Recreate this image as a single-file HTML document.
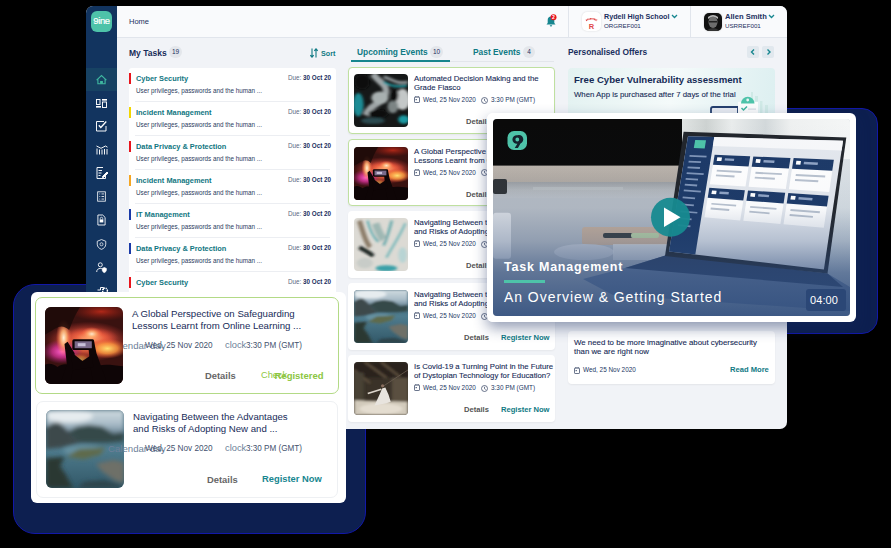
<!DOCTYPE html>
<html><head><meta charset="utf-8">
<style>
*{margin:0;padding:0;box-sizing:border-box}
html,body{width:891px;height:548px;overflow:hidden;background:#000}
body{position:relative;font-family:"Liberation Sans",sans-serif;color:#1b2f5e}
.a{position:absolute}
.panel{left:86px;top:6px;width:701px;height:423px;background:#f1f3f7;border-radius:7px;overflow:hidden}
.side{left:86px;top:6px;width:31px;height:423px;background:#12345f;border-radius:7px 0 0 7px}
.hdr{left:117px;top:6px;width:670px;height:32px;background:#f9fafc;border-bottom:1px solid #e1e5ec;border-radius:0 7px 0 0}
.nowrap{white-space:nowrap}
.a svg{display:block}
.teal{color:#0f7a84}
.bold{font-weight:bold}
.badge{background:#e3e6eb;border-radius:7px;color:#1b2f5e;text-align:center}
.tcard{left:129px;top:68px;width:207px;height:240px;background:#fff;border-radius:3px}
.trow .bar{position:absolute;left:129px;width:2px;height:11px}
.ttl{font-size:7.4px;font-weight:bold;color:#0f7681;white-space:nowrap}
.tsub{font-size:6.3px;color:#2a3b5e;white-space:nowrap}
.due{font-size:6.3px;color:#5a6780;white-space:nowrap}
.due b{color:#1b2f5e}
.sep{height:1px;background:#eceef2}
.ecard{left:348px;width:207px;height:66.5px;background:#fff;border-radius:4px;box-shadow:0 1px 2px rgba(0,0,0,.05)}
.ecard.g{border:1px solid #bfe0a0}
.eimg{width:54px;height:54px;border-radius:4px;overflow:hidden}
.etl{font-size:7.75px;color:#152a55;-webkit-text-stroke:0.1px #152a55;line-height:9.1px;white-space:nowrap}
.edt{font-size:6.4px;color:#22365f;white-space:nowrap}
.edet{font-size:7.6px;font-weight:bold;color:#555;white-space:nowrap}
.ereg{font-size:7.6px;font-weight:bold;color:#0f7a84;white-space:nowrap}
</style></head><body>
<svg width="0" height="0" style="position:absolute">
<defs>
<filter id="bl2" x="-20%" y="-20%" width="140%" height="140%"><feGaussianBlur stdDeviation="2.5"/></filter>
<radialGradient id="gW"><stop offset="0" stop-color="#fff3d8"/><stop offset=".4" stop-color="#ffb070" stop-opacity=".9"/><stop offset="1" stop-color="#ff6040" stop-opacity="0"/></radialGradient>
<radialGradient id="gO"><stop offset="0" stop-color="#ffc080"/><stop offset=".5" stop-color="#f06040" stop-opacity=".8"/><stop offset="1" stop-color="#c03030" stop-opacity="0"/></radialGradient>
<radialGradient id="gM"><stop offset="0" stop-color="#ff60d0"/><stop offset=".5" stop-color="#d03090" stop-opacity=".8"/><stop offset="1" stop-color="#a02070" stop-opacity="0"/></radialGradient>
<radialGradient id="gY"><stop offset="0" stop-color="#ffe070"/><stop offset=".5" stop-color="#ff9a40" stop-opacity=".8"/><stop offset="1" stop-color="#e05030" stop-opacity="0"/></radialGradient>
<radialGradient id="gR"><stop offset="0" stop-color="#b02818"/><stop offset="1" stop-color="#801810" stop-opacity="0"/></radialGradient>
<radialGradient id="gT"><stop offset="0" stop-color="#23a5ad"/><stop offset=".6" stop-color="#178a93" stop-opacity=".7"/><stop offset="1" stop-color="#178a93" stop-opacity="0"/></radialGradient>
<radialGradient id="gG"><stop offset="0" stop-color="#d8dcdc"/><stop offset=".6" stop-color="#9aa0a0" stop-opacity=".7"/><stop offset="1" stop-color="#808686" stop-opacity="0"/></radialGradient>
<radialGradient id="gD"><stop offset="0" stop-color="#101414"/><stop offset=".6" stop-color="#202424" stop-opacity=".8"/><stop offset="1" stop-color="#202424" stop-opacity="0"/></radialGradient>
<radialGradient id="gWh"><stop offset="0" stop-color="#ffffff"/><stop offset="1" stop-color="#f0f0f0" stop-opacity="0"/></radialGradient>
<linearGradient id="gSky" x1="0" x2="0" y1="0" y2="1"><stop offset="0" stop-color="#d0dbe0"/><stop offset=".6" stop-color="#a9bcc8"/><stop offset="1" stop-color="#6d8898"/></linearGradient>
<linearGradient id="gWat" x1="0" x2="0" y1="0" y2="1"><stop offset="0" stop-color="#3c5e70"/><stop offset=".5" stop-color="#4f7c8e"/><stop offset="1" stop-color="#325868"/></linearGradient>
<linearGradient id="gTun" x1="0" x2="0" y1="0" y2="1"><stop offset="0" stop-color="#2a251f"/><stop offset=".45" stop-color="#4d4438"/><stop offset=".65" stop-color="#6a6050"/><stop offset=".8" stop-color="#a8a090"/><stop offset="1" stop-color="#cdc6b8"/></linearGradient>
<symbol id="concert" viewBox="0 0 100 100" preserveAspectRatio="none">
<rect width="100" height="100" fill="#3a1210"/>
<ellipse cx="72" cy="6" rx="40" ry="12" fill="url(#gR)"/>
<ellipse cx="55" cy="45" rx="55" ry="26" fill="url(#gO)"/>
<ellipse cx="58" cy="40" rx="36" ry="14" fill="url(#gO)"/>
<ellipse cx="22" cy="58" rx="26" ry="16" fill="url(#gM)"/>
<ellipse cx="24" cy="40" rx="10" ry="24" fill="url(#gW)"/>
<ellipse cx="80" cy="54" rx="26" ry="13" fill="url(#gY)"/>
<ellipse cx="60" cy="35" rx="14" ry="9" fill="url(#gW)" opacity=".9"/>
<ellipse cx="45" cy="68" rx="16" ry="8" fill="url(#gY)" opacity=".6"/>
<path d="M0 0h45c-5 8-9 16-14 30-6-6-12-6-18-2L0 36z" fill="#1c0a08" opacity=".85"/>
<path d="M0 75c6-3 12 0 16 3 6-5 14-4 20-1 10-3 20-2 26 2 8-5 18-5 38-2V100H0z" fill="#0e0506"/>
<path d="M25 48L29 45 38 60 37 76 32 100 20 100 28 74z" fill="#0e0506"/>
<path d="M58 43L63 45 66 60 73 80 80 100 62 100 58 76 56 56z" fill="#0e0506"/>
<path d="M33 58L48 70 60 62 62 78 36 82z" fill="#0e0506"/>
<rect x="35" y="42" width="28" height="14" rx="2" fill="#0e0506"/>
<rect x="38" y="44.5" width="22" height="9" fill="#7a6a8a"/>
<rect x="42" y="47" width="10" height="4" fill="#c8c0d8"/>
</symbol>
<symbol id="land" viewBox="0 0 100 100" preserveAspectRatio="none">
<rect width="100" height="100" fill="url(#gWat)"/>
<g filter="url(#bl2)">
<rect width="100" height="30" fill="url(#gSky)"/>
<ellipse cx="30" cy="8" rx="30" ry="8" fill="#e6ecef"/>
<path d="M0 22L8 17 16 16 24 22 34 34 44 42 20 48 0 50z" fill="#3e4a4c"/>
<path d="M28 28L40 21 55 19 72 21 86 30 100 28 100 40 80 42 44 42z" fill="#34484a"/>
<ellipse cx="48" cy="52" rx="26" ry="7" fill="#7ea6b4" opacity=".5"/>
<path d="M26 60L42 50 76 48 70 57 48 63z" fill="#5e6a4c"/>
<path d="M0 62L24 60 18 72 26 84 32 96 36 100 0 100z" fill="#2c3830"/>
<path d="M64 69L86 64 100 67 100 94 88 90 72 79z" fill="#6e7068"/>
<path d="M40 100L50 92 75 90 95 96 100 100z" fill="#2e444c"/>
</g>
</symbol>
<symbol id="marble" viewBox="0 0 100 100" preserveAspectRatio="none">
<rect width="100" height="100" fill="#161818"/>
<g filter="url(#bl2)">
<path d="M35 0C45 15 65 20 58 40 52 58 30 55 22 78" stroke="#9ea4a6" stroke-width="12" fill="none"/>
<path d="M55 5C70 10 80 20 100 15" stroke="#8a9294" stroke-width="6" fill="none"/>
<ellipse cx="90" cy="48" rx="14" ry="20" fill="#c4c8c8"/>
<ellipse cx="48" cy="45" rx="16" ry="12" fill="#a8b0b0"/>
<ellipse cx="72" cy="62" rx="10" ry="12" fill="#7c8484"/>
<ellipse cx="8" cy="58" rx="10" ry="22" fill="#1a8c95"/>
<path d="M55 15C65 22 80 25 98 22" stroke="#1a9aa3" stroke-width="4" fill="none"/>
<ellipse cx="92" cy="86" rx="10" ry="8" fill="#1a9aa3"/>
<ellipse cx="35" cy="88" rx="22" ry="6" fill="#2a4a50"/>
<ellipse cx="75" cy="40" rx="7" ry="12" fill="#0c0d0d"/>
<ellipse cx="45" cy="75" rx="18" ry="8" fill="#0c0d0d"/>
<ellipse cx="15" cy="15" rx="14" ry="14" fill="#0c0d0d"/>
</g>
</symbol>
<symbol id="light" viewBox="0 0 100 100" preserveAspectRatio="none">
<rect width="100" height="100" fill="#dcdad4"/>
<g filter="url(#bl2)">
<path d="M10 5C15 20 20 45 30 55" stroke="#8a7a66" stroke-width="9" fill="none"/>
<path d="M10 55C20 62 30 65 35 72" stroke="#1e2624" stroke-width="8" fill="none"/>
<path d="M25 5C30 25 35 35 45 45" stroke="#2a9aa2" stroke-width="3" fill="none"/>
<path d="M40 10C45 25 50 35 55 40" stroke="#9fb8b4" stroke-width="14" fill="none"/>
<path d="M70 5C65 25 60 40 55 52" stroke="#1a8a92" stroke-width="3" fill="none"/>
<path d="M95 10C85 35 70 55 60 75" stroke="#4aa8ae" stroke-width="3" fill="none"/>
<ellipse cx="60" cy="95" rx="20" ry="6" fill="#3aa0a8"/>
<ellipse cx="90" cy="70" rx="8" ry="15" fill="#b8d4d4"/>
<ellipse cx="20" cy="85" rx="15" ry="10" fill="#c8ccc8"/>
</g>
</symbol>
<symbol id="ballet" viewBox="0 0 100 100" preserveAspectRatio="none">
<rect width="100" height="100" fill="#3a3228"/>
<g filter="url(#bl2)">
<rect x="0" y="0" width="100" height="30" fill="#2a241e"/>
<path d="M20 0L60 30M50 0L85 28M0 15L30 40" stroke="#5e503e" stroke-width="4"/>
<rect x="0" y="20" width="18" height="55" fill="#4a4236"/>
<rect x="70" y="30" width="30" height="45" fill="#5a5040"/>
<path d="M0 72L100 75 100 100 0 100z" fill="#d2cabb"/>
<ellipse cx="50" cy="88" rx="40" ry="10" fill="#e4ddd0"/>
</g>
<path d="M55 45L100 15" stroke="#6a5e50" stroke-width="1.5"/>
<path d="M38 82L48 60 52 50 58 48 64 62 68 75 60 78z" fill="#e8e4de"/>
<path d="M25 58L50 50 51 53 26 61z" fill="#ddd6cc"/>
<circle cx="53" cy="45" r="3" fill="#8a7060"/>
</symbol>
</defs></svg>

<!-- SHADOWS -->
<div class="a" style="left:470px;top:108px;width:408px;height:226px;background:#0d1f50;border:1.5px solid #1218a8;border-radius:16px;filter:blur(0.7px)"></div>
<div class="a" style="left:13px;top:284px;width:353px;height:250px;background:#0d1f50;border:1.5px solid #1218a8;border-radius:22px;filter:blur(0.7px)"></div>
<!-- MAIN PANEL -->
<div class="a panel"></div>
<div class="a side"></div>
<div class="a" style="left:91px;top:11px;width:21px;height:21px;background:#4ec3a9;border-radius:6px;color:#fff;font-size:9.5px;text-align:center;line-height:20px;letter-spacing:-0.4px;-webkit-text-stroke:0.2px #fff">9ine</div>
<div class="a" style="left:86px;top:68px;width:31px;height:23px;background:#174263"></div>
<svg class="a" style="left:86px;top:68px" width="31" height="230" viewBox="0 0 31 230" fill="none" stroke="#fff" stroke-width="0.95">
<!-- home y=80 (local 12) -->
<path d="M10.6 12.2L15.5 7.6L20.4 12.2M11.9 10.9v4.9h7.2v-4.9" stroke="#3fb8a0" stroke-width="1.1"/>
<rect x="14.1" y="13" width="2.8" height="2.8" fill="#3fb8a0" stroke="none"/>
<!-- dashboard y=103 (35) -->
<rect x="10.5" y="31.5" width="3.5" height="5" /><rect x="10" y="38" width="5" height="1.6" fill="#fff" stroke="none"/>
<rect x="16" y="31" width="5" height="1.6" fill="#fff" stroke="none"/><rect x="16.5" y="34" width="4" height="5.5"/>
<!-- checkbox y=126 (58) -->
<path d="M18 53.5h-7.5v9.5h9.5v-5"/><path d="M12.8 57.3l2 2.2 5.5-6" stroke-width="1.3"/>
<!-- chart y=150 (82) -->
<path d="M10.5 78l4.5 2.3 4.5-2.3 2 1.2"/><path d="M11 80.5v6M13.5 81.5v5M16 81.5v5M18.5 81v5.5M21 81v5.5"/>
<!-- doc pencil y=173 (105) -->
<path d="M17 99.5h-6v11h8.5v-3"/><path d="M12.5 102.5h3.5M12.5 105h3M12.5 107.5h2"/><path d="M16.5 108.5l4.5-4.5 1 1-4.5 4.5h-1z" fill="#fff"/>
<!-- list y=196 (128) -->
<g transform="translate(15.5 128.5) scale(0.85) translate(-15.5 -128)"><rect x="11" y="122.5" width="9" height="11"/><path d="M13 125h1M15.5 125h3M13 128h1M15.5 128h3M13 131h1M15.5 131h3"/></g>
<!-- lock doc y=220 (152) -->
<g transform="translate(15.5 151.8) scale(0.8) translate(-15.5 -152)"><path d="M11 146h6l3 3v9.5h-9z" stroke-width="1.1"/><rect x="13.2" y="151.5" width="4.6" height="3.8" fill="#fff" stroke="none"/><path d="M14 151.5v-1.2a1.5 1.5 0 0 1 3 0v1.2" stroke-width="0.9"/></g>
<!-- shield y=244 (176) -->
<g transform="translate(15.5 176.5) scale(0.85) translate(-15.5 -175.8)"><path d="M15.5 170l5 2v3.5c0 3-2.2 5-5 6-2.8-1-5-3-5-6V172z"/><circle cx="15.5" cy="175.5" r="1.8" stroke-width="0.8"/></g>
<!-- user shield y=268 (200) -->
<g transform="translate(15.5 200) scale(0.8) translate(-15.5 -200)"><circle cx="14" cy="196" r="2.5" stroke-width="1.1"/><path d="M9.5 205c0-3 2-4.5 4.5-4.5 1 0 1.8.2 2.4.6" stroke-width="1.1"/><path d="M19 199.5l2.5 1v2c0 1.6-1 2.6-2.5 3.2-1.5-.6-2.5-1.6-2.5-3.2v-2z" fill="#fff"/></g>
<!-- gear y=291 (223) -->
<path d="M11.5 222h3v-2.5h3v2.5"/><circle cx="19" cy="222.5" r="2.4" stroke-width="1.5" stroke-dasharray="1.1 0.7"/>
</svg>


<div class="a hdr"></div>
<div class="a nowrap" style="left:129px;top:17px;font-size:7.5px;color:#1b2f5e">Home</div>

<!-- header right -->
<div class="a" style="left:568px;top:6px;width:1px;height:31px;background:#e1e5ec"></div>
<div class="a" style="left:690px;top:6px;width:1px;height:31px;background:#e1e5ec"></div>
<svg class="a" style="left:545px;top:14px" width="12" height="14" viewBox="0 0 12 14"><path d="M6 2.5c-2 0-3.3 1.5-3.3 3.5v3L1.5 10.5h9L9.3 9V6c0-2-1.3-3.5-3.3-3.5z M4.8 11.3a1.2 1.2 0 0 0 2.4 0z" fill="#17868f"/><circle cx="8.5" cy="3.2" r="3" fill="#e8141c"/><text x="8.5" y="5.2" font-size="5" fill="#fff" text-anchor="middle" font-family="Liberation Sans" font-weight="bold">2</text></svg>
<div class="a" style="left:582px;top:12px;width:19px;height:19px;background:#fff;border-radius:5px;box-shadow:0 0 2px rgba(0,0,0,.15)"></div>
<svg class="a" style="left:582px;top:12px" width="19" height="19" viewBox="0 0 19 19"><path d="M4 8.5Q9.5 5 15 8.5" stroke="#e04848" stroke-width="1.6" fill="none" stroke-dasharray="1 0.4"/><text x="9.5" y="17" font-size="7.5" font-weight="bold" fill="#e04848" text-anchor="middle" font-family="Liberation Sans">R</text></svg>
<div class="a nowrap bold" style="left:604px;top:12px;font-size:7.2px;color:#1b2f5e">Rydell High School</div>
<div class="a nowrap" style="left:604px;top:22px;font-size:6.2px;color:#1b2f5e">ORGREF001</div>
<svg class="a" style="left:671px;top:14px" width="7" height="5"><path d="M1 1l2.5 2.5L6 1" stroke="#17868f" stroke-width="1.3" fill="none"/></svg>
<div class="a" style="left:704px;top:13px;width:18px;height:18px;background:#111;border-radius:5px;box-shadow:0 0 2px rgba(0,0,0,.2);overflow:hidden"><svg width="18" height="18"><ellipse cx="9" cy="9" rx="4.5" ry="6" fill="#6d6d6d"/><path d="M4 6q5-5 10 0v-2q-5-4-10 0z" fill="#bbb"/><rect x="5" y="8" width="8" height="1.5" fill="#222"/><path d="M2 18q7-6 14 0z" fill="#333"/></svg></div>
<div class="a nowrap bold" style="left:725px;top:12px;font-size:7.6px;color:#1b2f5e">Allen Smith</div>
<div class="a nowrap" style="left:725px;top:22px;font-size:6.2px;color:#1b2f5e">USRREF001</div>
<svg class="a" style="left:768px;top:14px" width="7" height="5"><path d="M1 1l2.5 2.5L6 1" stroke="#17868f" stroke-width="1.3" fill="none"/></svg>

<!-- My tasks header -->
<div class="a nowrap bold" style="left:129px;top:47.5px;font-size:8.5px;color:#172b58">My Tasks</div>
<div class="a badge" style="left:169px;top:46px;width:13px;height:12px;font-size:6.5px;line-height:12px">19</div>
<svg class="a" style="left:310px;top:47.5px" width="8" height="10" viewBox="0 0 8 10"><path d="M2 0.5v8.5M0.3 7.2L2 9.2 3.7 7.2M6 9.5V1M4.3 2.8L6 0.8 7.7 2.8" stroke="#0f7a84" stroke-width="1.1" fill="none"/></svg><div class="a nowrap bold teal" style="left:321px;top:48.5px;font-size:7.2px">Sort</div>

<!-- tasks card -->
<div class="a tcard"></div>
<div class="a" style="left:129px;top:73px;width:2px;height:11px;background:#e8141c"></div>
<div class="a ttl" style="left:136px;top:74px">Cyber Security</div>
<div class="a due" style="left:288px;top:74px">Due: <b>30 Oct 20</b></div>
<div class="a tsub" style="left:136px;top:87px">User privileges, passwords and the human ...</div>
<div class="a sep" style="left:135px;top:101px;width:195px"></div>
<div class="a" style="left:129px;top:107px;width:2px;height:11px;background:#f2d600"></div>
<div class="a ttl" style="left:136px;top:108px">Incident Management</div>
<div class="a due" style="left:288px;top:108px">Due: <b>30 Oct 20</b></div>
<div class="a tsub" style="left:136px;top:121px">User privileges, passwords and the human ...</div>
<div class="a sep" style="left:135px;top:135px;width:195px"></div>
<div class="a" style="left:129px;top:141px;width:2px;height:11px;background:#e8141c"></div>
<div class="a ttl" style="left:136px;top:142px">Data Privacy &amp; Protection</div>
<div class="a due" style="left:288px;top:142px">Due: <b>30 Oct 20</b></div>
<div class="a tsub" style="left:136px;top:155px">User privileges, passwords and the human ...</div>
<div class="a sep" style="left:135px;top:169px;width:195px"></div>
<div class="a" style="left:129px;top:175px;width:2px;height:11px;background:#f5a623"></div>
<div class="a ttl" style="left:136px;top:176px">Incident Management</div>
<div class="a due" style="left:288px;top:176px">Due: <b>30 Oct 20</b></div>
<div class="a tsub" style="left:136px;top:189px">User privileges, passwords and the human ...</div>
<div class="a sep" style="left:135px;top:203px;width:195px"></div>
<div class="a" style="left:129px;top:209px;width:2px;height:11px;background:#1a3aa8"></div>
<div class="a ttl" style="left:136px;top:210px">IT Management</div>
<div class="a due" style="left:288px;top:210px">Due: <b>30 Oct 20</b></div>
<div class="a tsub" style="left:136px;top:223px">User privileges, passwords and the human ...</div>
<div class="a sep" style="left:135px;top:237px;width:195px"></div>
<div class="a" style="left:129px;top:243px;width:2px;height:11px;background:#1a3aa8"></div>
<div class="a ttl" style="left:136px;top:244px">Data Privacy &amp; Protection</div>
<div class="a due" style="left:288px;top:244px">Due: <b>30 Oct 20</b></div>
<div class="a tsub" style="left:136px;top:257px">User privileges, passwords and the human ...</div>
<div class="a sep" style="left:135px;top:271px;width:195px"></div>
<div class="a" style="left:129px;top:277px;width:2px;height:11px;background:#e8141c"></div>
<div class="a ttl" style="left:136px;top:278px">Cyber Security</div>
<div class="a due" style="left:288px;top:278px">Due: <b>30 Oct 20</b></div>
<div class="a tsub" style="left:136px;top:291px">User privileges, passwords and the human ...</div>


<!-- events tabs -->
<div class="a nowrap bold teal" style="left:357px;top:47px;font-size:8.4px">Upcoming Events</div>
<div class="a badge" style="left:430px;top:46px;width:13px;height:12px;font-size:6.5px;line-height:12px">10</div>
<div class="a" style="left:351px;top:60px;width:99px;height:2px;background:#17868f"></div>
<div class="a" style="left:450px;top:61px;width:104px;height:1px;background:#e3e6eb"></div>
<div class="a nowrap bold teal" style="left:473px;top:47px;font-size:8.4px">Past Events</div>
<div class="a badge" style="left:523px;top:46px;width:12px;height:12px;font-size:6.5px;line-height:12px">4</div>

<!-- personalised offers -->
<div class="a nowrap bold" style="left:568px;top:47px;font-size:8.4px;color:#1b2f5e">Personalised Offers</div>
<div class="a" style="left:747px;top:46px;width:12px;height:12px;background:#e1e8ee;border-radius:2px"></div>
<div class="a" style="left:762px;top:46px;width:12px;height:12px;background:#e1e8ee;border-radius:2px"></div>
<svg class="a" style="left:747px;top:46px" width="28" height="12"><path d="M7 3.5L4.5 6 7 8.5" stroke="#17868f" stroke-width="1.4" fill="none"/><path d="M20.5 3.5L23 6 20.5 8.5" stroke="#17868f" stroke-width="1.4" fill="none"/></svg>

<div class="a" style="left:568px;top:68px;width:207px;height:60px;border-radius:4px;background:linear-gradient(100deg,#e3f2f1 0%,#f4fafa 50%,#dceff0 100%)"></div>
<svg class="a" style="left:700px;top:88px" width="75" height="25" viewBox="0 0 75 25">
<g fill="#cfe9e6"><rect x="51" y="4" width="2" height="21"/><rect x="55" y="8" width="3" height="17"/><rect x="60" y="13" width="2.5" height="12"/><rect x="65" y="17" width="3" height="8"/></g>
<path d="M11 25v-4a2 2 0 0 1 2-2h25v6" fill="#e8ecf2" stroke="#25406e" stroke-width="1.8"/>
<rect x="38" y="13.8" width="20" height="12" fill="#fbfcfc"/>
<path d="M41 15.5a6.7 6.7 0 0 1 13.5 0z" fill="#4ec3a9"/><circle cx="47.7" cy="12" r="1.4" fill="#e8f4f3"/>
<path d="M41.5 20l2 2 3.5-3.5" stroke="#3fb39d" stroke-width="1.5" fill="none"/><rect x="48" y="20.5" width="8" height="1.2" fill="#d5dbe3"/>
</svg>
<div class="a nowrap bold" style="left:574px;top:74px;font-size:9.6px;color:#152a55">Free Cyber Vulnerability assessment</div>
<div class="a nowrap" style="left:574px;top:90px;font-size:7.8px;color:#152a55;-webkit-text-stroke:0.1px #152a55">When App is purchased after 7 days of the trial</div>

<div class="a" style="left:568px;top:331px;width:207px;height:53px;background:#fff;border-radius:4px;box-shadow:0 1px 2px rgba(0,0,0,.06)"></div>
<div class="a" style="left:574px;top:338px;font-size:7.85px;line-height:9.4px;color:#152a55;-webkit-text-stroke:0.1px #152a55;white-space:nowrap">We need to be more imaginative about cybersecurity<br>than we are right now</div>
<div class="a" style="left:574px;top:366.5px"><svg width="6" height="7" viewBox="0 0 6 7"><rect x="0.5" y="1" width="5" height="5.5" rx="0.6" fill="none" stroke="#44526e" stroke-width="0.8"/><rect x="1.5" y="0" width="0.8" height="1.6" fill="#44526e"/><rect x="3.7" y="0" width="0.8" height="1.6" fill="#44526e"/><rect x="1.6" y="3" width="1.2" height="1.2" fill="#44526e"/></svg></div>
<div class="a nowrap" style="left:583px;top:366px;font-size:6.4px;color:#22365f">Wed, 25 Nov 2020</div>
<div class="a nowrap bold teal" style="left:730px;top:365px;font-size:7.6px">Read More</div>

<div class="a ecard g" style="top:67px"></div>
<svg class="a" style="left:354px;top:74px;border-radius:4px" width="54" height="53"><use href="#marble" width="54" height="53"/></svg>
<div class="a etl" style="left:414px;top:74px">Automated Decision Making and the<br>Grade Fiasco</div>
<div class="a" style="left:414px;top:96px"><svg width="6" height="7" viewBox="0 0 6 7"><rect x="0.5" y="1" width="5" height="5.5" rx="0.6" fill="none" stroke="#44526e" stroke-width="0.8"/><rect x="1.5" y="0" width="0.8" height="1.6" fill="#44526e"/><rect x="3.7" y="0" width="0.8" height="1.6" fill="#44526e"/><rect x="1.6" y="3" width="1.2" height="1.2" fill="#44526e"/></svg></div>
<div class="a edt" style="left:423px;top:96px">Wed, 25 Nov 2020</div>
<div class="a" style="left:481px;top:96.5px"><svg width="7" height="7" viewBox="0 0 7 7"><circle cx="3.5" cy="3.5" r="3" fill="none" stroke="#44526e" stroke-width="0.8"/><path d="M3.5 1.8v1.9l1.2 0.8" stroke="#44526e" stroke-width="0.8" fill="none"/></svg></div>
<div class="a edt" style="left:491px;top:96px">3:30 PM (GMT)</div>
<div class="a edet" style="left:466px;top:117px">Details</div>
<div class="a ecard g" style="top:139px"></div>
<svg class="a" style="left:354px;top:146.5px;border-radius:4px" width="54" height="53"><use href="#concert" width="54" height="53"/></svg>
<div class="a etl" style="left:414px;top:146.5px">A Global Perspective on Safeguarding<br>Lessons Learnt from Online Learning ...</div>
<div class="a" style="left:414px;top:168.5px"><svg width="6" height="7" viewBox="0 0 6 7"><rect x="0.5" y="1" width="5" height="5.5" rx="0.6" fill="none" stroke="#44526e" stroke-width="0.8"/><rect x="1.5" y="0" width="0.8" height="1.6" fill="#44526e"/><rect x="3.7" y="0" width="0.8" height="1.6" fill="#44526e"/><rect x="1.6" y="3" width="1.2" height="1.2" fill="#44526e"/></svg></div>
<div class="a edt" style="left:423px;top:168.5px">Wed, 25 Nov 2020</div>
<div class="a" style="left:481px;top:169.0px"><svg width="7" height="7" viewBox="0 0 7 7"><circle cx="3.5" cy="3.5" r="3" fill="none" stroke="#44526e" stroke-width="0.8"/><path d="M3.5 1.8v1.9l1.2 0.8" stroke="#44526e" stroke-width="0.8" fill="none"/></svg></div>
<div class="a edt" style="left:491px;top:168.5px">3:30 PM (GMT)</div>
<div class="a edet" style="left:466px;top:189.5px">Details</div>
<div class="a ecard" style="top:211px"></div>
<svg class="a" style="left:354px;top:218px;border-radius:4px" width="54" height="53"><use href="#light" width="54" height="53"/></svg>
<div class="a etl" style="left:414px;top:218px">Navigating Between the Advantages<br>and Risks of Adopting New and ...</div>
<div class="a" style="left:414px;top:240px"><svg width="6" height="7" viewBox="0 0 6 7"><rect x="0.5" y="1" width="5" height="5.5" rx="0.6" fill="none" stroke="#44526e" stroke-width="0.8"/><rect x="1.5" y="0" width="0.8" height="1.6" fill="#44526e"/><rect x="3.7" y="0" width="0.8" height="1.6" fill="#44526e"/><rect x="1.6" y="3" width="1.2" height="1.2" fill="#44526e"/></svg></div>
<div class="a edt" style="left:423px;top:240px">Wed, 25 Nov 2020</div>
<div class="a" style="left:481px;top:240.5px"><svg width="7" height="7" viewBox="0 0 7 7"><circle cx="3.5" cy="3.5" r="3" fill="none" stroke="#44526e" stroke-width="0.8"/><path d="M3.5 1.8v1.9l1.2 0.8" stroke="#44526e" stroke-width="0.8" fill="none"/></svg></div>
<div class="a edt" style="left:491px;top:240px">3:30 PM (GMT)</div>
<div class="a edet" style="left:466px;top:261px">Details</div>
<div class="a ecard" style="top:283px"></div>
<svg class="a" style="left:354px;top:290px;border-radius:4px" width="54" height="53"><use href="#land" width="54" height="53"/></svg>
<div class="a etl" style="left:414px;top:290px">Navigating Between the Advantages<br>and Risks of Adopting New and ...</div>
<div class="a" style="left:414px;top:312px"><svg width="6" height="7" viewBox="0 0 6 7"><rect x="0.5" y="1" width="5" height="5.5" rx="0.6" fill="none" stroke="#44526e" stroke-width="0.8"/><rect x="1.5" y="0" width="0.8" height="1.6" fill="#44526e"/><rect x="3.7" y="0" width="0.8" height="1.6" fill="#44526e"/><rect x="1.6" y="3" width="1.2" height="1.2" fill="#44526e"/></svg></div>
<div class="a edt" style="left:423px;top:312px">Wed, 25 Nov 2020</div>
<div class="a" style="left:481px;top:312.5px"><svg width="7" height="7" viewBox="0 0 7 7"><circle cx="3.5" cy="3.5" r="3" fill="none" stroke="#44526e" stroke-width="0.8"/><path d="M3.5 1.8v1.9l1.2 0.8" stroke="#44526e" stroke-width="0.8" fill="none"/></svg></div>
<div class="a edt" style="left:491px;top:312px">3:30 PM (GMT)</div>
<div class="a edet" style="left:464px;top:333px">Details</div>
<div class="a ereg" style="left:501px;top:333px">Register Now</div>
<div class="a ecard" style="top:355px"></div>
<svg class="a" style="left:354px;top:362px;border-radius:4px" width="54" height="53"><use href="#ballet" width="54" height="53"/></svg>
<div class="a etl" style="left:414px;top:362px">Is Covid-19 a Turning Point in the Future<br>of Dystopian Technology for Education?</div>
<div class="a" style="left:414px;top:384px"><svg width="6" height="7" viewBox="0 0 6 7"><rect x="0.5" y="1" width="5" height="5.5" rx="0.6" fill="none" stroke="#44526e" stroke-width="0.8"/><rect x="1.5" y="0" width="0.8" height="1.6" fill="#44526e"/><rect x="3.7" y="0" width="0.8" height="1.6" fill="#44526e"/><rect x="1.6" y="3" width="1.2" height="1.2" fill="#44526e"/></svg></div>
<div class="a edt" style="left:423px;top:384px">Wed, 25 Nov 2020</div>
<div class="a" style="left:481px;top:384.5px"><svg width="7" height="7" viewBox="0 0 7 7"><circle cx="3.5" cy="3.5" r="3" fill="none" stroke="#44526e" stroke-width="0.8"/><path d="M3.5 1.8v1.9l1.2 0.8" stroke="#44526e" stroke-width="0.8" fill="none"/></svg></div>
<div class="a edt" style="left:491px;top:384px">3:30 PM (GMT)</div>
<div class="a edet" style="left:464px;top:405px">Details</div>
<div class="a ereg" style="left:501px;top:405px">Register Now</div>

<!-- VIDEO -->
<div class="a" style="left:487px;top:113px;width:369px;height:209px;border-radius:6px;box-shadow:0 6px 14px rgba(20,40,90,.45)"></div>
<div class="a" style="left:487px;top:113px;width:369px;height:209px;background:#fff;border-radius:6px"></div>
<svg class="a" style="left:493px;top:119px;border-radius:4px" width="357" height="197" viewBox="0 0 357 197">
<defs>
<linearGradient id="win" x1="0" x2="1" y1="0" y2="0"><stop offset="0" stop-color="#e1e5e4"/><stop offset=".15" stop-color="#cdd2d1"/><stop offset=".3" stop-color="#e9ecec"/><stop offset=".5" stop-color="#d2d8da"/><stop offset=".65" stop-color="#eef0f0"/><stop offset="1" stop-color="#f4f6f6"/></linearGradient>
<linearGradient id="chin" x1="0" x2="0" y1="0" y2="1"><stop offset="0" stop-color="#bcb4ac"/><stop offset="1" stop-color="#aea8a2"/></linearGradient>
<linearGradient id="under" x1="0" x2="0" y1="0" y2="1"><stop offset="0" stop-color="#9a9ea3"/><stop offset=".5" stop-color="#b0b5ba"/><stop offset="1" stop-color="#b6bcc4"/></linearGradient>
<linearGradient id="rside" x1="0" x2="0" y1="0" y2="1"><stop offset="0" stop-color="#e8ecee"/><stop offset=".5" stop-color="#d0d8de"/><stop offset="1" stop-color="#a9b6c4"/></linearGradient>
<linearGradient id="ov" x1="0" x2="0" y1="0" y2="1"><stop offset="0" stop-color="#2c4a7a" stop-opacity="0"/><stop offset=".45" stop-color="#2c4a7a" stop-opacity=".03"/><stop offset=".62" stop-color="#2c4a7a" stop-opacity=".25"/><stop offset=".78" stop-color="#2c4a7a" stop-opacity=".62"/><stop offset="1" stop-color="#2e4c7c" stop-opacity=".88"/></linearGradient>
</defs>
<rect x="0" y="0" width="357" height="197" fill="#b3bac3"/>
<rect x="188" y="0" width="169" height="197" fill="url(#rside)"/>
<rect x="188" y="0" width="169" height="40" fill="url(#win)"/>
<rect x="0" y="0" width="189" height="47" fill="#0a0a0a"/>
<rect x="0" y="46.6" width="189" height="17" fill="url(#chin)"/>
<rect x="0" y="63" width="189" height="16" fill="url(#under)"/>
<rect x="40" y="68" width="90" height="3" fill="#b8bdc2" opacity=".7"/>
<rect x="0" y="60" width="14" height="15" rx="2" fill="#303438"/>
<rect x="0" y="93.7" width="18" height="46" rx="3" fill="#d8dce2"/>
<rect x="89" y="108" width="88" height="18" rx="3" fill="#c8b19d"/>
<rect x="110" y="114" width="30" height="5" rx="2" fill="#3a3f40"/><rect x="138" y="114" width="28" height="5" rx="2" fill="#bcd3a6"/>
<ellipse cx="91" cy="133" rx="30" ry="8" fill="#c9ced6"/>
<rect x="120" y="125" width="60" height="16" fill="#dfe2e6" opacity=".7"/>
<polygon points="90,160 132,149 174,136 334.5,154.5 357,168 357,192 120,176" fill="#7084a4"/>
<polygon points="132,149 174.7,135.7 334.5,154.5 350,168" fill="#2c3f62"/>
<polygon points="190.6,12.8 353.3,18.4 334.5,154.5 172,137" fill="#22262c"/>
<polygon points="195.0,17.3 350.0,21.8 330.9,150.5 176.0,132.5" fill="#e4e8ee" />
<polygon points="195.0,17.3 221.3,18.1 202.3,135.6 176.0,132.5" fill="#1d3a68" />
<polygon points="202.2,21.0 213.0,21.3 211.7,29.5 200.8,29.1" fill="#4ec3a9" />
<polygon points="196.6,35.9 213.7,36.7 213.4,38.4 196.3,37.7" fill="#7f95b8" />
<polygon points="195.7,41.7 208.1,42.3 207.8,44.0 195.4,43.4" fill="#7f95b8" />
<polygon points="194.7,47.5 207.1,48.1 206.8,49.9 194.4,49.2" fill="#7f95b8" />
<polygon points="193.8,53.3 210.8,54.2 210.5,56.0 193.5,55.0" fill="#7f95b8" />
<polygon points="192.8,59.1 205.2,59.8 204.9,61.6 192.5,60.8" fill="#7f95b8" />
<polygon points="191.9,64.8 204.3,65.6 204.0,67.4 191.6,66.6" fill="#7f95b8" />
<polygon points="190.9,70.6 208.0,71.8 207.7,73.5 190.6,72.3" fill="#7f95b8" />
<polygon points="189.8,77.5 202.2,78.5 201.9,80.2 189.5,79.3" fill="#7f95b8" />
<polygon points="188.6,84.5 201.0,85.5 200.7,87.2 188.3,86.2" fill="#7f95b8" />
<polygon points="187.5,91.4 204.5,92.9 204.2,94.6 187.2,93.2" fill="#7f95b8" />
<polygon points="186.3,98.4 198.7,99.5 198.5,101.2 186.1,100.1" fill="#7f95b8" />
<polygon points="185.2,105.3 197.6,106.5 197.3,108.2 184.9,107.0" fill="#7f95b8" />
<polygon points="221.3,18.1 350.0,21.8 348.6,31.5 219.9,26.9" fill="#f7f8fa" />
<polygon points="221.6,35.8 257.2,37.3 252.5,67.5 216.8,65.3" fill="#ffffff" />
<polygon points="221.6,35.8 257.2,37.3 255.6,47.6 220.0,45.8" fill="#1d3a68" />
<polygon points="223.9,50.8 248.7,52.1 248.4,53.9 223.6,52.6" fill="#b9c2cf" />
<polygon points="223.1,55.5 241.7,56.6 241.4,58.4 222.8,57.3" fill="#b9c2cf" />
<polygon points="224.3,38.3 229.0,38.5 228.4,42.1 223.7,41.9" fill="#ffffff" />
<polygon points="232.0,39.2 241.3,39.7 240.9,42.0 231.6,41.6" fill="#8fa3c4" />
<polygon points="260.3,37.5 297.5,39.0 292.8,70.1 255.6,67.7" fill="#ffffff" />
<polygon points="260.3,37.5 297.5,39.0 295.9,49.6 258.7,47.7" fill="#1d3a68" />
<polygon points="262.6,52.8 289.0,54.2 288.7,56.1 262.3,54.7" fill="#b9c2cf" />
<polygon points="261.9,57.7 282.0,58.8 281.7,60.7 261.6,59.5" fill="#b9c2cf" />
<polygon points="263.1,40.0 267.7,40.2 267.1,43.9 262.5,43.7" fill="#ffffff" />
<polygon points="270.7,41.0 281.6,41.4 281.2,43.9 270.3,43.4" fill="#8fa3c4" />
<polygon points="300.6,39.1 340.9,40.8 336.2,72.9 295.9,70.3" fill="#ffffff" />
<polygon points="300.6,39.1 340.9,40.8 339.3,51.7 299.0,49.7" fill="#1d3a68" />
<polygon points="302.9,55.0 332.3,56.5 332.1,58.4 302.6,56.9" fill="#b9c2cf" />
<polygon points="302.1,60.0 325.4,61.3 325.1,63.2 301.9,61.9" fill="#b9c2cf" />
<polygon points="303.4,41.8 308.0,42.0 307.4,45.7 302.8,45.5" fill="#ffffff" />
<polygon points="311.0,42.7 325.0,43.4 324.6,45.9 310.6,45.3" fill="#8fa3c4" />
<polygon points="216.3,68.8 251.9,71.2 247.2,101.4 211.5,98.2" fill="#ffffff" />
<polygon points="216.3,68.8 251.9,71.2 250.3,81.4 214.7,78.8" fill="#1d3a68" />
<polygon points="218.5,83.9 243.3,85.8 243.0,87.6 218.3,85.6" fill="#b9c2cf" />
<polygon points="217.8,88.6 236.4,90.1 236.1,91.9 217.5,90.4" fill="#b9c2cf" />
<polygon points="219.0,71.4 223.6,71.7 223.1,75.2 218.4,74.9" fill="#ffffff" />
<polygon points="226.6,72.5 235.9,73.1 235.6,75.5 226.3,74.9" fill="#8fa3c4" />
<polygon points="255.0,71.4 292.2,73.8 287.4,104.9 250.3,101.7" fill="#ffffff" />
<polygon points="255.0,71.4 292.2,73.8 290.6,84.4 253.4,81.7" fill="#1d3a68" />
<polygon points="257.3,86.9 283.6,88.9 283.3,90.8 257.0,88.7" fill="#b9c2cf" />
<polygon points="256.5,91.7 276.7,93.4 276.4,95.2 256.2,93.6" fill="#b9c2cf" />
<polygon points="257.7,74.0 262.4,74.3 261.8,78.0 257.2,77.6" fill="#ffffff" />
<polygon points="265.4,75.1 276.2,75.9 275.8,78.3 265.0,77.6" fill="#8fa3c4" />
<polygon points="295.3,74.0 335.6,76.7 330.8,108.8 290.5,105.2" fill="#ffffff" />
<polygon points="295.3,74.0 335.6,76.7 334.0,87.6 293.7,84.6" fill="#1d3a68" />
<polygon points="297.6,90.0 327.0,92.3 326.7,94.2 297.3,91.9" fill="#b9c2cf" />
<polygon points="296.8,95.0 320.0,96.9 319.8,98.8 296.5,96.9" fill="#b9c2cf" />
<polygon points="298.0,76.8 302.7,77.1 302.1,80.8 297.4,80.5" fill="#ffffff" />
<polygon points="305.7,77.9 319.6,78.9 319.2,81.4 305.3,80.4" fill="#8fa3c4" />
<rect x="0" y="0" width="357" height="197" fill="url(#ov)"/>
<circle cx="177.5" cy="98.3" r="19.5" fill="#178a90" opacity=".95"/>
<polygon points="171,88.5 171,108 187.5,98.3" fill="#fff"/>
<rect x="14.5" y="12" width="19.5" height="19" rx="6.5" fill="#4ec3a9"/>
<path d="M24.3 16.2a4.3 4.3 0 1 0 0.1 8.5l-2.7 4.3h3.2l2.6-4.6a4.3 4.3 0 0 0-3.2-8.2zm0 2.4a1.9 1.9 0 1 1 0 3.8a1.9 1.9 0 0 1 0-3.8z" fill="#14232e"/>
</svg>
<div class="a nowrap bold" style="left:504px;top:260.3px;font-size:12.5px;letter-spacing:0.78px;color:#fff">Task Management</div>
<div class="a" style="left:504px;top:280px;width:41px;height:3px;background:#4ec3a9"></div>
<div class="a nowrap" style="left:504px;top:289.3px;font-size:14px;letter-spacing:0.95px;color:#fff">An Overview &amp; Getting Started</div>
<div class="a" style="left:806px;top:289px;width:40px;height:22px;background:#2b4776;border-radius:3px;color:#fff;font-size:11px;line-height:22px;text-align:left;padding-left:4px;letter-spacing:0.1px">04:00</div>

<!-- OVERLAY -->
<div class="a" style="left:31px;top:292px;width:315px;height:211px;background:#fff;border-radius:6px"></div>
<div class="a" style="left:35px;top:297px;width:304px;height:97px;border:1px solid #b3da86;border-radius:7px"></div>
<div class="a" style="left:36px;top:401px;width:302px;height:97px;border:1px solid #eef0f3;border-radius:7px"></div>
<div class="a nowrap" style="left:108px;top:340px;font-size:9.63px;color:#6d7f99">Calendar-day</div>
<svg class="a" style="left:45px;top:307px;border-radius:6px" width="78" height="77"><use href="#concert" width="78" height="77"/></svg>
<div class="a" style="left:132px;top:308px;font-size:9.63px;line-height:11.8px;color:#172b58;white-space:nowrap">A Global Perspective on Safeguarding<br>Lessons Learnt from Online Learning ...</div>
<div class="a nowrap" style="left:145px;top:341.2px;font-size:8.2px;color:#44526e">Wed, 25 Nov 2020</div>
<div class="a nowrap" style="left:225px;top:340px;font-size:9.3px;color:#6d7f99">clock</div>
<div class="a nowrap" style="left:246px;top:341.2px;font-size:8.15px;color:#44526e">3:30 PM (GMT)</div>
<div class="a nowrap bold" style="left:205px;top:370px;font-size:9.4px;color:#666">Details</div>
<div class="a nowrap" style="left:261px;top:370px;font-size:9.2px;color:#8cc63f">Check</div>
<div class="a nowrap bold" style="left:274.5px;top:370px;font-size:9.5px;color:#8cc63f">Registered</div>

<svg class="a" style="left:46px;top:410px;border-radius:6px" width="78" height="78"><use href="#land" width="78" height="78"/></svg>
<div class="a nowrap" style="left:108px;top:442.5px;font-size:9.63px;color:#6d7f99">Calendar-day</div>
<div class="a" style="left:133px;top:411px;font-size:9.63px;line-height:11.8px;color:#172b58;white-space:nowrap">Navigating Between the Advantages<br>and Risks of Adopting New and ...</div>
<div class="a nowrap" style="left:145px;top:443.5px;font-size:8.2px;color:#44526e">Wed, 25 Nov 2020</div>
<div class="a nowrap" style="left:225px;top:442.5px;font-size:9.3px;color:#6d7f99">clock</div>
<div class="a nowrap" style="left:246px;top:443.5px;font-size:8.15px;color:#44526e">3:30 PM (GMT)</div>
<div class="a nowrap bold" style="left:207px;top:474px;font-size:9.4px;color:#666">Details</div>
<div class="a nowrap bold" style="left:262px;top:474px;font-size:9.35px;color:#17868f">Register Now</div>


</body></html>
